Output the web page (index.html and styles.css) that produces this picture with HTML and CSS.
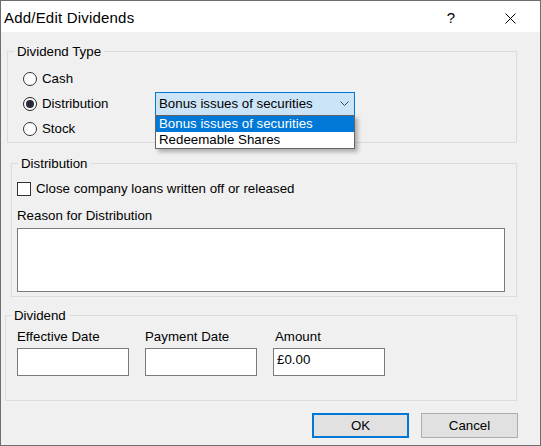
FILE: index.html
```html
<!DOCTYPE html>
<html>
    <head>
        <meta charset="utf-8">
        <title>Add/Edit Dividends</title>
        <link rel="stylesheet" href="styles.css">
    </head>
    <body>
        <div class="window">
            <div class="titlebar">
                <span class="title">Add/Edit Dividends</span>
                <span class="help">?</span>
                <svg class="close" width="11" height="11" viewBox="0 0 11 11">
                    <path d="M0.5 0.5L10.5 10.5M10.5 0.5L0.5 10.5" stroke="#000" stroke-width="1" fill="none"/>
                </svg>
            </div>

            <div class="dialog_body">
                <fieldset class="group type_group">
                    <legend>Dividend Type</legend>
                    <div class="group_inner type_inner">
                        <div class="option_row">
                            <label class="option"><span class="radio"></span>Cash</label>
                        </div>
                        <div class="option_row">
                            <label class="option option_wide"><span class="radio checked"></span>Distribution</label>
                            <div class="combo">
                                <span class="combo_text">Bonus issues of securities</span>
                                <svg class="chevron" width="9" height="5" viewBox="0 0 9 5">
                                    <path d="M0.5 0.5L4.5 4.5L8.5 0.5" stroke="#444" stroke-width="1" fill="none"/>
                                </svg>
                                <ul class="dropdown">
                                    <li class="selected">Bonus issues of securities</li>
                                    <li>Redeemable Shares</li>
                                </ul>
                            </div>
                        </div>
                        <div class="option_row">
                            <label class="option"><span class="radio"></span>Stock</label>
                        </div>
                    </div>
                </fieldset>

                <fieldset class="group dist_group">
                    <legend>Distribution</legend>
                    <div class="group_inner dist_inner">
                        <label class="check_row"><span class="checkbox"></span>Close company loans written off or released</label>
                        <div class="field_label reason_label">Reason for Distribution</div>
                        <textarea class="reason"></textarea>
                    </div>
                </fieldset>

                <fieldset class="group div_group">
                    <legend>Dividend</legend>
                    <div class="group_inner div_inner">
                        <div class="field">
                            <div class="field_label">Effective Date</div>
                            <input class="text_box" type="text">
                        </div>
                        <div class="field">
                            <div class="field_label">Payment Date</div>
                            <input class="text_box" type="text">
                        </div>
                        <div class="field">
                            <div class="field_label amount_label">Amount</div>
                            <input class="text_box" type="text" value="£0.00">
                        </div>
                    </div>
                </fieldset>

                <div class="buttons">
                    <button class="btn btn_default">OK</button>
                    <button class="btn">Cancel</button>
                </div>
            </div>
        </div>
    </body>
</html>
```

FILE: styles.css
```css
body{
    margin: 0; font-family: "Liberation Sans", Arial, sans-serif; font-size: 13.3px; line-height: 15px; color: #000;
}

.window{
    width: 541px; height: 446px; box-sizing: border-box; border: 1px solid #6e6e6e; background-color: #f0f0f0; overflow: hidden;
}

/* title bar */
.titlebar{
    height: 31px; box-sizing: border-box; background-color: #fff; display: flex; align-items: flex-start; padding: 8px 0 0 3px;
}
.title{
    flex: 1; font-size: 15px; line-height: 17px; letter-spacing: 0.2px;
}
.help{
    font-size: 15px; line-height: 17px; margin-right: 50px;
}
.close{
    margin: 4px 24px 0 0;
}

/* group boxes */
.group{
    border: 1px solid #dcdcdc; padding: 0; margin: 0; min-width: 0; box-sizing: border-box;
}
.group legend{
    padding: 0 3px; margin-left: 6px; line-height: 15px; font-weight: normal;
}
.type_group{
    width: 510px; margin: 12px 0 0 6px;
}
.dist_group{
    width: 506px; margin: 13px 0 0 10px;
}
.div_group{
    width: 512px; margin: 11px 0 0 4px;
}
.div_group legend{
    margin-left: 5px;
}

.type_inner{
    padding: 7px 0 1px 15px;
}
.option_row{
    height: 25px; display: flex; align-items: center; position: relative;
}
.option{
    display: flex; align-items: center; gap: 5px;
}
.option_wide{
    width: 132px;
}
.radio{
    width: 14px; height: 14px; box-sizing: border-box; border: 1px solid #333; border-radius: 50%; background-color: #fff; display: flex; align-items: center; justify-content: center;
}
.radio.checked{
    border-color: #222;
}
.radio.checked::after{
    content: ""; width: 8px; height: 8px; border-radius: 50%; background-color: #2b2833;
}

/* combo box with open list */
.combo{
    width: 200px; height: 24px; box-sizing: border-box; border: 1px solid #0078d7; background-color: #cce4f7; display: flex; align-items: center; padding: 0 5px 0 3px; position: relative;
}
.combo_text{
    flex: 1;
}
.dropdown{
    position: absolute; left: -1px; right: -1px; top: 100%; margin: 0; padding: 0; list-style: none; background-color: #fff; border: 1px solid #646464; box-shadow: 3px 3px 4px rgba(0, 0, 0, 0.28); z-index: 2;
}
.dropdown li{
    height: 16px; line-height: 16px; padding-left: 3px;
}
.dropdown li.selected{
    background-color: #0078d7; color: #fff;
}

/* distribution */
.dist_inner{
    padding: 10px 0 4px 5px;
}
.check_row{
    display: flex; align-items: center; gap: 5px; height: 15px;
}
.checkbox{
    width: 14px; height: 14px; box-sizing: border-box; border: 1px solid #333; background-color: #fff;
}
.reason_label{
    margin-top: 12px;
}
.reason{
    display: block; width: 488px; height: 64px; box-sizing: border-box; margin: 5px 0 0 0; border: 1px solid #7a7a7a; background-color: #fff; resize: none; font: inherit;
}

/* dividend */
.div_inner{
    padding: 6px 0 24px 11px; display: grid; grid-template-columns: 112px 112px 112px; column-gap: 16px;
}
.amount_label{
    padding-left: 2px;
}
.text_box{
    display: block; width: 112px; height: 28px; box-sizing: border-box; margin: 4px 0 0 0; border: 1px solid #7a7a7a; background-color: #fff; padding: 3px 3px 9px 3px; font: inherit; color: #000;
}

/* buttons */
.buttons{
    display: flex; justify-content: flex-end; gap: 12px; margin-top: 12px; padding-right: 22px;
}
.btn{
    width: 97px; height: 25px; box-sizing: border-box; border: 1px solid #adadad; background-color: #e1e1e1; font: inherit; color: #000; padding: 0;
}
.btn_default{
    border: 2px solid #0078d7;
}
```
